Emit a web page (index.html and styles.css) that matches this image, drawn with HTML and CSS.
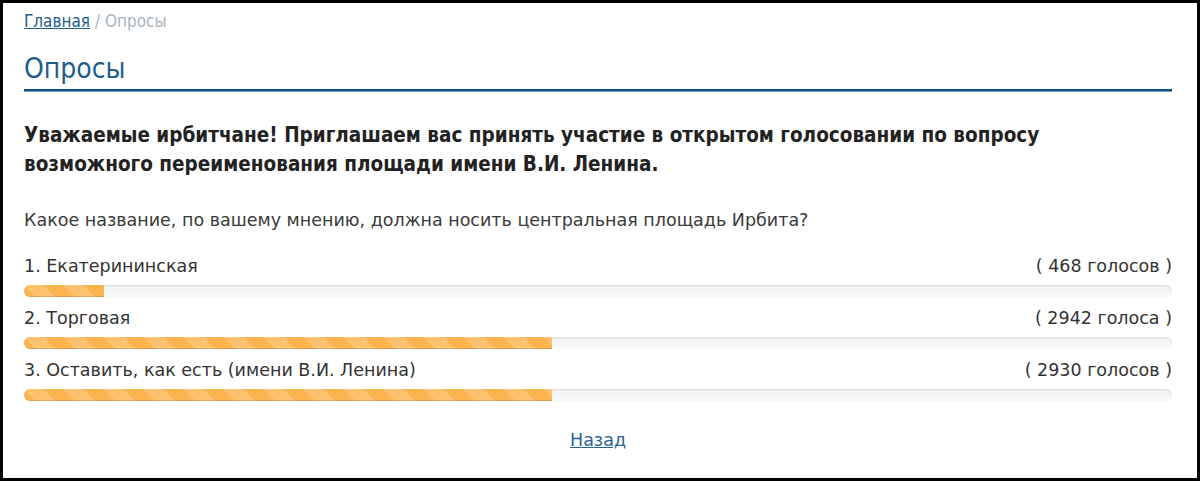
FILE: index.html
```html
<!DOCTYPE html>
<html lang="ru">
<head>
<meta charset="utf-8">
<title>Опросы</title>
<link rel="stylesheet" href="styles.css">
</head>
<body>
<div class="frame">
  <div class="crumbs"><a href="#" class="crumb-link">Главная</a> <span class="crumb-sep">/</span> <span class="crumb-current">Опросы</span></div>
  <h1 class="page-title">Опросы</h1>
  <h2 class="poll-intro">Уважаемые ирбитчане! Приглашаем вас принять участие в открытом голосовании по вопросу возможного переименования площади имени В.И. Ленина.</h2>
  <p class="poll-question">Какое название, по вашему мнению, должна носить центральная площадь Ирбита?</p>
  <div class="poll-results">
    <div class="result">
      <div class="result-head"><span class="result-name">1. Екатерининская</span><span class="result-count">( 468 голосов )</span></div>
      <div class="progress"><div class="bar" style="width: 7%"></div></div>
    </div>
    <div class="result">
      <div class="result-head"><span class="result-name">2. Торговая</span><span class="result-count">( 2942 голоса )</span></div>
      <div class="progress"><div class="bar" style="width: 46%"></div></div>
    </div>
    <div class="result">
      <div class="result-head"><span class="result-name">3. Оставить, как есть (имени В.И. Ленина)</span><span class="result-count">( 2930 голосов )</span></div>
      <div class="progress"><div class="bar" style="width: 46%"></div></div>
    </div>
  </div>
  <div class="back"><a href="#" class="back-link">Назад</a></div>
</div>
</body>
</html>
```
FILE: styles.css
```css
* { box-sizing: border-box; }
html, body { margin: 0; padding: 0; background: #fff; }
.frame {
  height: 481px;
  border: 3px solid #000;
  padding: 0 25px 0 21px;
  font-family: "DejaVu Sans", sans-serif;
  color: #333;
  overflow: hidden;
}
.crumbs {
  margin-top: 9px;
  font-family: "DejaVu Sans Condensed", "DejaVu Sans", sans-serif;
  font-size: 17px;
  line-height: 18px;
  color: #a9b4bf;
}
.crumb-link { color: #245d89; text-decoration: underline; }
.page-title {
  margin: 22px 0 0;
  padding-bottom: 3px;
  font-family: "DejaVu Sans Condensed", "DejaVu Sans", sans-serif;
  font-weight: normal;
  font-size: 28px;
  line-height: 34px;
  color: #1f5d8c;
  border-bottom: 2px solid #0d5387;
  box-shadow: 0 1px 0 #6f9cbf;
}
.poll-intro {
  margin: 30px 0 0;
  max-width: 1090px;
  font-family: "DejaVu Sans Condensed", "DejaVu Sans", sans-serif;
  font-weight: bold;
  font-size: 20.5px;
  line-height: 29px;
  color: #222;
}
.poll-question {
  margin: 29px 0 0;
  font-size: 17.5px;
  line-height: 24px;
  color: #3a3a3a;
}
.poll-results { margin-top: 22px; }
.result { margin-bottom: 9px; }
.result-head {
  display: flex;
  justify-content: space-between;
  font-size: 17.5px;
  line-height: 24px;
  color: #333;
  margin-bottom: 7px;
}
.progress {
  height: 12px;
  border-radius: 6px;
  overflow: hidden;
  background: linear-gradient(#f3f3f3, #f9f9f9);
  box-shadow: inset 0 1px 2px rgba(0,0,0,0.1);
}
.bar {
  height: 100%;
  background-color: #fbb450;
  background-image: linear-gradient(45deg,
    rgba(255,255,255,0.18) 25%, transparent 25%,
    transparent 50%, rgba(255,255,255,0.18) 50%,
    rgba(255,255,255,0.18) 75%, transparent 75%, transparent);
  background-size: 40px 40px;
  box-shadow: inset 0 -1px 0 rgba(0,0,0,0.12);
}
.back {
  margin-top: 27px;
  text-align: center;
  font-size: 17.5px;
  line-height: 24px;
}
.back-link { color: #2a6496; text-decoration: underline; }
```
